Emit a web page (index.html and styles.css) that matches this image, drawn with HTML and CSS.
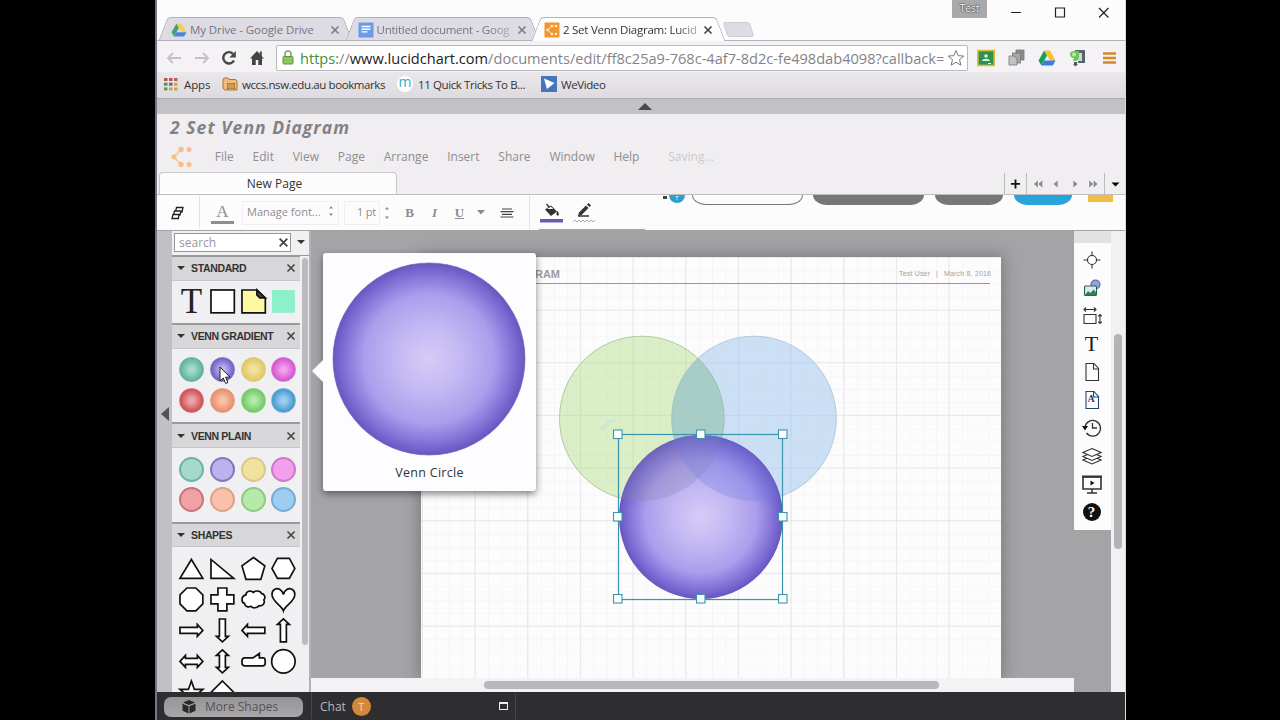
FILE: index.html
```html
<!DOCTYPE html>
<html lang="en">
<head>
  <meta charset="UTF-8" />
  <meta name="viewport" content="width=device-width, initial-scale=1.0" />
  <title>2 Set Venn Diagram: Lucidchart</title>
  <link rel="stylesheet" href="styles.css">
</head>
<body>
  <div class="window">

    <!-- Browser tabs -->
    <div class="tabstrip">
      <div class="tab">
        <svg class="tab-icon" viewBox="0 0 16 16"><path fill="#3fa66b" d="M5.5 1.5 0.5 10.2 3 14.5 8 5.8z"/><path fill="#f3cf55" d="M5.5 1.5h5l5 8.7h-5z"/><path fill="#4a86d8" d="M3 14.5h10l2.5-4.3h-10z"/></svg>
        <span class="tab-title t1">My Drive - Google Drive</span>
        <svg class="tab-x" viewBox="0 0 10 10"><path d="M1.5 1.5l7 7M8.5 1.5l-7 7"/></svg>
      </div>
      <div class="tab">
        <svg class="tab-icon" viewBox="0 0 16 16"><rect x=".5" y=".5" width="15" height="15" rx="1" fill="#6b9ae6"/><path stroke="#fff" stroke-width="1.4" d="M3.5 4.5h9M3.5 7.2h9M3.5 9.9h6"/></svg>
        <span class="tab-title t2">Untitled document - Goog</span>
        <svg class="tab-x" viewBox="0 0 10 10"><path d="M1.5 1.5l7 7M8.5 1.5l-7 7"/></svg>
      </div>
      <div class="tab active">
        <svg class="tab-icon" viewBox="0 0 16 16"><rect x=".5" y=".5" width="15" height="15" rx="1" fill="#f0962c"/><g fill="#fff0da"><circle cx="3.6" cy="8" r="1.3"/><circle cx="8" cy="4" r="1.3"/><circle cx="12" cy="4" r="1.3"/><circle cx="8" cy="12" r="1.3"/><circle cx="12" cy="12" r="1.3"/></g><path fill="none" stroke="#fff0da" stroke-width=".9" d="M8 4 3.6 8 8 12"/></svg>
        <span class="tab-title t3">2 Set Venn Diagram: Lucid</span>
        <svg class="tab-x" viewBox="0 0 10 10"><path d="M1.5 1.5l7 7M8.5 1.5l-7 7"/></svg>
      </div>
      <div class="new-tab"></div>
      <div class="window-buttons">
        <span class="profile">Test</span>
        <svg width="120" height="24" viewBox="0 0 120 24" fill="none" stroke="#222" stroke-width="1.2"><path d="M16 12.500h10M60.500 8h9v9h-9zM104 8l9.500 9.500M113.500 8l-9.500 9.500"/></svg>
      </div>
    </div>

    <div class="address-row">
      <div class="nav-buttons">
        <svg width="18" height="18" viewBox="0 0 18 18" class="nav off"><path d="M16 9H3M8 4 3 9l5 5"/></svg>
        <svg width="18" height="18" viewBox="0 0 18 18" class="nav off"><path d="M2 9h13M10 4l5 5-5 5"/></svg>
        <svg width="18" height="18" viewBox="0 0 18 18" class="nav"><path d="M14 11.500A5.700 5.700 0 1 1 13 4.800"/><path d="M15.800 2v6.500H9.300z" fill="#444" stroke="none"/></svg>
        <svg width="18" height="18" viewBox="0 0 18 18"><path fill="#444" d="M9 2 2 9.500h2V16h3.700v-5h2.600v5H14V9.500h2l-2.200-2.300V2.500h-2v2.400z"/></svg>
      </div>
      <div class="omnibox">
        <svg width="12" height="15" viewBox="0 0 12 15"><path fill="none" stroke="#8d9a86" stroke-width="1.6" d="M3 7V4a3 3 0 0 1 6 0v3"/><rect x="1" y="6.500" width="10" height="7.500" rx="1" fill="#8cc860" stroke="#5f9544"/></svg>
        <span class="url"><span class="secure">https:</span>//<span class="host">www.lucidchart.com</span>/documents/edit/ff8c25a9-768c-4af7-8d2c-fe498dab4098?callback=</span>
        <svg class="star" width="18" height="18" viewBox="0 0 18 18"><path fill="#fff" stroke="#777" d="M9 1.500l2.200 5.200 5.600.4-4.300 3.600 1.400 5.500L9 13.200l-4.900 3 1.400-5.500L1.200 7.100l5.600-.4z"/></svg>
      </div>
      <div class="extensions">
        <svg width="18" height="18" viewBox="0 0 18 18"><rect x=".8" y="1.500" width="16.400" height="15" fill="#2f9350" stroke="#e2bd3d" stroke-width="1.600"/><circle cx="9" cy="7" r="1.800" fill="#d9f2dd"/><path fill="#d9f2dd" d="M5 12c.5-3 7.500-3 8 0z"/><path stroke="#fff" d="M11 14.500h3"/></svg>
        <svg width="18" height="18" viewBox="0 0 18 18" stroke="#777" stroke-width=".8"><rect x="8" y="1" width="8" height="10" fill="#8b8b8b"/><rect x="4.500" y="4" width="8" height="10" fill="#a6a6a6"/><path d="M1 7h5l3 3v6H1z" fill="#c2c2c2"/></svg>
        <svg width="18" height="18" viewBox="0 0 18 18"><path fill="#1c9e5a" d="M6.200 1.500.5 11.400l2.900 5 5.700-9.900z"/><path fill="#f6c42c" d="M6.200 1.500h5.700l5.700 9.900h-5.700z"/><path fill="#3b7bdc" d="M3.400 16.400h11.400l2.800-5H6.300z"/></svg>
        <svg width="18" height="18" viewBox="0 0 18 18"><path fill="#59636a" d="M6 1h10v13H9v-2h4V4H6z"/><path fill="#cfd5d8" d="M9 4h4v8H9z"/><path fill="#6cc45d" d="M1 5q0-3 4-3h5v5q0 5-4 5H4l1-3Q1 9 1 5z"/><circle cx="5" cy="5.500" r="2" fill="#b7eba6"/><path fill="#555" d="M5 13h3v2H5zM4 15h5l-2.500 2.500z"/></svg>
        <svg class="hamburger" width="14" height="18" viewBox="0 0 14 18"><path stroke="#d18a25" stroke-width="2.400" d="M0 4.500h13M0 9h13M0 13.500h13"/></svg>
      </div>
    </div>

    <div class="bookmarks">
      <svg width="14" height="14" viewBox="0 0 14 14"><path fill="#c0533f" d="M0 1h3.500v3H0zM5 1h3.500v3H5z"/><path fill="#b5624a" d="M10 1h3.500v3H10z"/><path fill="#4d8d59" d="M0 5.700h3.500v3H0z"/><path fill="#486fa8" d="M5 5.700h3.500v3H5z"/><path fill="#d6a13c" d="M10 5.700h3.500v3H10zM5 10.400h3.500v3H5zM10 10.400h3.500v3H10z"/><path fill="#6d9b45" d="M0 10.400h3.500v3H0z"/></svg>
      <span class="bm b1">Apps</span>
      <svg width="16" height="14" viewBox="0 0 16 14"><path fill="#efbd7c" stroke="#a97230" d="M1 2.500 2 1h4l1 1.500h6.500L15 4v9H2.500L1 11z"/><path fill="#8f5a20" d="M5 6h8v6H5z"/><path stroke="#efbd7c" stroke-width=".8" d="M5 8h8M5 10h8M7 6v6M9 6v6M11 6v6"/></svg>
      <span class="bm b2">wccs.nsw.edu.au bookmarks</span>
      <span class="m-icon">m</span>
      <span class="bm b3">11 Quick Tricks To B...</span>
      <svg width="16" height="16" viewBox="0 0 16 16"><rect width="16" height="16" fill="#4577b8"/><path fill="#fff" d="M3 2.500 13.500 7 6 13z"/></svg>
      <span class="bm b4">WeVideo</span>
    </div>

    <div class="collapse-bar"><span class="up-arrow"></span></div>

    <!-- Document header -->
    <header class="doc-header">
      <h1 class="doc-title">2 Set Venn Diagram</h1>
      <nav class="menu">
        <svg class="brand" width="24" height="24" viewBox="0 0 24 24"><path fill="none" stroke="#f4c99c" stroke-width="1.800" d="M11 4.500 4 12l7 7.500"/><g fill="#f1c08c"><circle cx="4" cy="12" r="2.500"/><circle cx="11" cy="4.500" r="2.700"/><circle cx="19" cy="4.500" r="2.500"/><circle cx="11" cy="19.500" r="2.700"/><circle cx="19" cy="19.500" r="2.500"/></g></svg>
        <a>File</a><a>Edit</a><a>View</a><a>Page</a><a>Arrange</a><a>Insert</a><a>Share</a><a>Window</a><a>Help</a>
        <span class="saving">Saving...</span>
      </nav>
      <div class="page-tabs">
        <div class="page-tab">New Page</div>
        <div class="page-nav">
          <svg class="add" width="23" height="21" viewBox="0 0 23 21"><path stroke="#111" stroke-width="2" d="M11.500 6v10M6.500 11h10"/></svg>
          <svg class="steps" width="78" height="21" viewBox="0 0 78 21" fill="#8a898c"><path d="M11 7.500v7L7 11zM15.500 7.500v7L11.500 11zM31 7.500v7L27 11zM47 7.500v7l4-3.500zM63 7.500v7l4-3.500zM67.500 7.500v7l4-3.500z"/></svg>
          <svg width="20" height="21" viewBox="0 0 20 21"><path d="M6.500 9.500h8L10.500 13.500z"/></svg>
        </div>
      </div>
    </header>

    <div class="toolbar">
      <div class="tool first"><svg width="14" height="14" viewBox="0 0 14 14" fill="#fff" stroke="#222" stroke-width="1.300"><path d="M5.500 1.500H12l-1 4.500H4.500z"/><path d="M3.500 5H10L9 9H2.500z"/><path d="M2 8.500h6l-.7 4H1z"/></svg></div>
      <div class="tool font-color"><span>A</span></div>
      <div class="font-select"><span>Manage font...</span><svg width="6" height="10" viewBox="0 0 6 10" fill="#8a8a8a"><path d="M3 0l2 2.500H1zM3 10l2-2.500H1z"/></svg></div>
      <div class="size-box">1 pt</div>
      <div class="tool spin"><svg width="6" height="12" viewBox="0 0 6 12" fill="#8a8a8a"><path d="M3 0l2 2.500H1zM3 12l2-2.500H1z"/></svg></div>
      <div class="tool letter">B</div>
      <div class="tool letter italic">I</div>
      <div class="tool letter underline">U</div>
      <div class="tool caret"><svg width="8" height="5" viewBox="0 0 8 5"><path fill="#888" d="M0 0h8L4 4.500z"/></svg></div>
      <div class="tool align"><svg width="14" height="10" viewBox="0 0 14 10"><path stroke="#444" stroke-width="1.200" d="M2 1h10M0.500 3.700h13M2 6.300h10M0.500 9h13"/></svg></div>
      <div class="tool fill-tool">
        <svg width="24" height="22" viewBox="0 0 24 22"><path d="M6 8.500l6-4 6 6-6 4.500z" fill="#333"/><path d="M7.500 3l5 6" stroke="#333" stroke-width="1.300"/><path d="M8 8l4-2.300 2.300 2.300z" fill="#fff"/><path d="M18.500 10c1.500 2 2 4.500.3 4.500S17 12 18.500 10z" fill="#333"/><path d="M1 18h23v3.500H1z" fill="#675db0"/></svg>
      </div>
      <div class="tool pen-tool">
        <svg width="24" height="22" viewBox="0 0 24 22"><path d="M7 11.500 14 4.500l2.500 2.500-7 7-3.500 1z" fill="#333"/><path d="M15 3.500l1.500-1.500L19 4.500 17.500 6z" fill="#333"/><path d="M6 15h11" stroke="#333" stroke-width="1.500"/><path d="M1 21l2-2 2 2 2-2 2 2 2-2 2 2 2-2 2 2 2-2 2 2 2-2" fill="none" stroke="#aaa"/></svg>
      </div>
      <div class="scroll-line"></div>
      <div class="clipped">
        <span class="dot"></span>
        <span class="avatar">T</span>
        <span class="pill outline"></span>
        <span class="pill dark wide"></span>
        <span class="pill dark"></span>
        <span class="pill blue"></span>
        <span class="square-btn"></span>
      </div>
    </div>

    <!-- Workspace -->
    <div class="workspace">
      <div class="rail"><span class="left-arrow"></span></div>

      <aside class="shapes-panel">
        <div class="search-row">
          <div class="search-box"><span>search</span><svg class="close" viewBox="0 0 10 10"><path d="M1.5 1.5l7 7M8.5 1.5l-7 7"/></svg></div>
          <span class="down-arrow"></span>
        </div>
        <div class="sections">
          <div class="section-list">
            <section>
              <h2><span class="down-arrow"></span>STANDARD<svg class="close" viewBox="0 0 10 10"><path d="M1.5 1.5l7 7M8.5 1.5l-7 7"/></svg></h2>
              <div class="shape-grid">
                <span class="t-shape">T</span>
                <svg viewBox="0 0 31 31" class="shape"><rect x="4" y="4" width="23.500" height="23"/></svg>
                <svg viewBox="0 0 31 31" class="shape note"><path d="M4 4h15l8.500 8.500V27H4z"/><path d="M19 4v5l3 3h5.500z" fill="#444"/></svg>
                <svg viewBox="0 0 31 31"><rect x="4" y="4" width="23" height="23" fill="#8cf0cb"/></svg>
              </div>
            </section>
            <section>
              <h2><span class="down-arrow"></span>VENN GRADIENT<svg class="close" viewBox="0 0 10 10"><path d="M1.5 1.5l7 7M8.5 1.5l-7 7"/></svg></h2>
              <div class="shape-grid">
                <i class="venn grad teal"></i><i class="venn grad violet"></i><i class="venn grad yellow"></i><i class="venn grad pink"></i>
                <i class="venn grad red"></i><i class="venn grad orange"></i><i class="venn grad green"></i><i class="venn grad sky"></i>
              </div>
            </section>
            <section>
              <h2><span class="down-arrow"></span>VENN PLAIN<svg class="close" viewBox="0 0 10 10"><path d="M1.5 1.5l7 7M8.5 1.5l-7 7"/></svg></h2>
              <div class="shape-grid">
                <i class="venn teal"></i><i class="venn violet"></i><i class="venn yellow"></i><i class="venn pink"></i>
                <i class="venn red"></i><i class="venn orange"></i><i class="venn green"></i><i class="venn sky"></i>
              </div>
            </section>
            <section>
              <h2><span class="down-arrow"></span>SHAPES<svg class="close" viewBox="0 0 10 10"><path d="M1.5 1.5l7 7M8.5 1.5l-7 7"/></svg></h2>
              <div class="shape-grid">
                <svg viewBox="0 0 31 31" class="shape"><path d="M15.500 6.500 27 25.500H4z"/></svg>
                <svg viewBox="0 0 31 31" class="shape"><path d="M4 6.500v19h23z"/></svg>
                <svg viewBox="0 0 31 31" class="shape"><path d="M15.500 4.500 27 13l-4 13.500H8L4 13z"/></svg>
                <svg viewBox="0 0 31 31" class="shape"><path d="M9.500 5.500h12L27 15.500l-5.500 10h-12L4 15.500z"/></svg>

                <svg viewBox="0 0 31 31" class="shape"><path d="M11 4h9l7 7v9l-7 7h-9l-7-7v-9z"/></svg>
                <svg viewBox="0 0 31 31" class="shape"><path d="M11 4h9v7h7v9h-7v7h-9v-7H4v-9h7z"/></svg>
                <svg viewBox="0 0 31 31" class="shape"><path d="M8 11C8 7 13 6 15.500 8.500 18 6 23 7 23.500 9.500 27 10 28 14 26 16c1.500 3-1 6.500-5 6-2 2.500-6 2.500-8 .5-3 1.500-6 0-6.500-3C3 18.500 3 12 8 11z"/></svg>
                <svg viewBox="0 0 31 31" class="shape"><path d="M15.500 27C14 22 4 17.500 4 10.500 4 5 9 3.500 12 5.500c2 1.200 3 3 3.500 5 .5-2 1.500-3.800 3.500-5 3-2 8-.5 8 5C27 17.500 17 22 15.500 27z"/></svg>

                <svg viewBox="0 0 31 31" class="shape"><path d="M4 12.500h17.500v-3L27 15.500l-5.500 6v-3H4z"/></svg>
                <svg viewBox="0 0 31 31" class="shape"><path d="M12.500 4v17.500h-3l6 5.500 6-5.500h-3V4z"/></svg>
                <svg viewBox="0 0 31 31" class="shape"><path d="M27 12.500H9.500v-3L4 15.500l5.500 6v-3H27z"/></svg>
                <svg viewBox="0 0 31 31" class="shape"><path d="M12.500 27V9.500h-3l6-5.500 6 5.500h-3V27z"/></svg>

                <svg viewBox="0 0 31 31" class="shape"><path d="M4 15.500l5.500-6v3h12v-3l5.500 6-5.500 6v-3h-12v3z"/></svg>
                <svg viewBox="0 0 31 31" class="shape"><path d="M15.500 4l6 5.500h-3v12h3l-6 5.500-6-5.500h3v-12h-3z"/></svg>
                <svg viewBox="0 0 31 31" class="shape"><path d="M7 12h8l6.500-4.500V12H25q2.300 0 2.300 2.300v3.400q0 2.300-2.300 2.300H7q-3 0-3-3v-2q0-3 3-3z"/></svg>
                <svg viewBox="0 0 31 31" class="shape"><circle cx="15.500" cy="15.500" r="11.800"/></svg>

                <svg viewBox="0 0 31 31" class="shape"><path d="M15.500 4l3 8.500H27l-6.700 5.500 2.700 8.500-7.500-5-7.500 5 2.700-8.500L4 12.500h8.500z"/></svg>
                <svg viewBox="0 0 31 31" class="shape"><path d="M15.500 4 27 15.500 15.500 27 4 15.500z"/></svg>
              </div>
            </section>
          </div>
          <div class="panel-scroll"><span></span></div>
        </div>
        <svg class="cursor" width="12" height="19" viewBox="0 0 12 19"><path fill="#fff" stroke="#222" d="M1 1v14l3.300-3 2.400 5.500 2.200-1-2.300-5.300H11z"/></svg>
      </aside>

      <main class="canvas-area">
        <div class="canvas">
          <svg class="paper" width="580" height="421" viewBox="421 257 580 421">
            <defs>
              <pattern id="minor" x="475" y="310" width="13.170" height="13.170" patternUnits="userSpaceOnUse"><path d="M.5 0v13.170M0 .5h13.170" stroke="#f6f4f7" fill="none"/></pattern>
              <pattern id="major" x="474.500" y="309.500" width="52.670" height="52.670" patternUnits="userSpaceOnUse"><path d="M.5 0v52.670M0 .5h52.670" stroke="#e9e6ea" fill="none"/></pattern>
              <radialGradient id="ball">
                <stop offset="0" stop-color="#d6ccf6"/>
                <stop offset=".35" stop-color="#c3b8f3"/>
                <stop offset=".68" stop-color="#aa9dec"/>
                <stop offset=".88" stop-color="#8171d7"/>
                <stop offset="1" stop-color="#6656c0"/>
              </radialGradient>
            </defs>
            <rect x="421" y="257" width="580" height="421" fill="#fdfcfd"/>
            <rect x="421" y="257" width="580" height="421" fill="url(#minor)"/>
            <rect x="421" y="257" width="580" height="421" fill="url(#major)"/>
            <text class="paper-title" x="560" y="278" text-anchor="end">2 SET VENN DIAGRAM</text>
            <text class="paper-meta" x="899" y="276" textLength="31">Test User</text>
            <text class="paper-meta" x="936" y="276">|</text>
            <text class="paper-meta" x="944" y="276" textLength="47">March 8, 2016</text>
            <path d="M431 283.500h559" stroke="#98979a"/>
            <circle cx="754" cy="418.500" r="82.300" fill="#9cc4ee" fill-opacity=".5" stroke="#9fb9d6" stroke-opacity=".7"/>
            <circle cx="641.800" cy="418.500" r="82.300" fill="#a9dc7c" fill-opacity=".42" stroke="#93bd80" stroke-opacity=".7"/>
            <path d="M697.900 358a82.300 82.300 0 0 1 0 121 82.300 82.300 0 0 1 0-121z" fill="#8db8cc" fill-opacity=".45"/>
            <path d="M602 430q3-8 13-10" fill="none" stroke="#bfdcec" stroke-width="3" stroke-opacity=".4"/>
            <circle cx="701" cy="517" r="82" fill="url(#ball)"/>
            <clipPath id="inside"><circle cx="701" cy="517" r="82"/></clipPath>
            <g clip-path="url(#inside)">
              <circle cx="641.800" cy="418.500" r="82.300" fill="#8585a8" fill-opacity=".27"/>
              <circle cx="754" cy="418.500" r="82.300" fill="#6c78de" fill-opacity=".25"/>
            </g>
            <rect x="618.500" y="434.500" width="164" height="165" fill="none" stroke="#3b94ab" stroke-width="1.200"/>
            <g fill="#fafffe" stroke="#3b94ab" stroke-width="1.100">
              <rect x="613.500" y="430" width="8.500" height="8.500"/><rect x="696.500" y="430" width="8.500" height="8.500"/><rect x="778.500" y="430" width="8.500" height="8.500"/>
              <rect x="613.500" y="512.500" width="8.500" height="8.500"/><rect x="778.500" y="512.500" width="8.500" height="8.500"/>
              <rect x="613.500" y="594.500" width="8.500" height="8.500"/><rect x="696.500" y="594.500" width="8.500" height="8.500"/><rect x="778.500" y="594.500" width="8.500" height="8.500"/>
            </g>
          </svg>
        </div>
        <div class="h-scroll"><span></span></div>
        <div class="preview">
          <svg width="194" height="194" viewBox="0 0 194 194"><circle cx="97" cy="97" r="96" fill="url(#ball)" stroke="#7466b8" stroke-width=".7"/></svg>
          <p>Venn Circle</p>
        </div>
      </main>

      <div class="dock-column">
        <div class="dock">
          <svg viewBox="0 0 20 20"><circle cx="10" cy="10" r="4.500"/><path d="M10 1.500v4M10 14.500v4M1.500 10h4M14.500 10h4"/></svg>
          <svg viewBox="0 0 20 20"><circle cx="13.500" cy="6.500" r="4.500" fill="#8fa3d8" stroke="#50629c"/><rect x="2.500" y="8" width="12" height="9.500" rx="1" fill="#d8eef0" stroke="#285e58"/><path d="M3 17l3-4 2.500 2 3-3.500 3 3.500V17z" fill="#2f8253" stroke="none"/></svg>
          <svg viewBox="0 0 20 20"><path d="M2 8.500h12v9H2zM2 3.500h12M4 1.500l-2 2 2 2M12 1.500l2 2-2 2M18 8.500v9M16.200 10.300 18 8.500l1.800 1.800M16.200 15.700 18 17.500l1.800-1.800"/></svg>
          <span class="dock-t">T</span>
          <svg viewBox="0 0 20 20"><path d="M4 1.500h8l4.500 5v12H4zM11.500 1.500v5.500h5"/></svg>
          <svg viewBox="0 0 20 20"><path d="M4 1.500h8l4.500 5v12H4zM11.500 1.500v5.500h5" stroke="#24446c"/><text x="5.500" y="12" class="dock-a">A</text></svg>
          <svg viewBox="0 0 20 20"><path d="M3 9a7.800 7.800 0 1 1 1.500 6M10.500 5v5h4.500" stroke-width="1.300"/><path d="M0 8h6l-3 4.500z" fill="#111" stroke="none"/></svg>
          <svg viewBox="0 0 20 20"><path d="M10 10l9 4-9 4-9-4z" class="layer"/><path d="M10 6.500l9 4-9 4-9-4z" class="layer"/><path d="M10 2.500l9 4-9 4-9-4z" class="layer"/></svg>
          <svg viewBox="0 0 20 20"><path d="M1 3h18v12H1z" stroke-width="1.600"/><path d="M8.500 6.500v5l4-2.500z" fill="#111" stroke="none"/><path d="M10 15v4M5 19h10" stroke-width="1.500"/><path d="M0 2.500h20" stroke-width="2"/></svg>
          <span class="help">?</span>
        </div>
      </div>
      <div class="v-scroll"><span></span></div>
    </div>

    <footer>
      <div class="more-shapes">
        <svg width="14" height="14" viewBox="0 0 14 14" fill="#292929"><path d="M7 0l6 2.500L7 5 1 2.500zM.5 3.700l6 2.500V13.500l-6-2.700zM13.500 3.700l-6 2.500v7.300l6-2.700z"/></svg>
        <span>More Shapes</span>
      </div>
      <div class="chat">
        <span class="chat-label">Chat</span>
        <span class="chat-user">T</span>
        <span class="chat-box"></span>
      </div>
    </footer>
  </div>
</body>
</html>
```
FILE: styles.css
```css
* {
  margin: 0;
  padding: 0;
  box-sizing: border-box;
}

body {
  background: #000;
  font-family: 'Open Sans', 'Noto Sans', sans-serif;
  font-size: 12px;
  height: 720px;
  overflow: hidden;
}

svg {
  display: block;
  flex: none;
}

.window {
  width: 971px;
  height: 720px;
  margin-left: 155px;
  border-left: 2px solid #77728f;
  border-right: 1px solid #ddd2e6;
  background: #fdfcfd;
  display: flex;
  flex-direction: column;
  overflow: hidden;
}

/* Browser tabs */
.tabstrip {
  height: 41px;
  flex: none;
  display: flex;
  align-items: flex-end;
  padding-left: 6px;
  border-bottom: 1px solid #b2b0b9;
}

.tab {
  position: relative;
  width: 185px;
  height: 23px;
  margin-right: 1.5px;
  padding: 2px 8px 0 8px;
  display: flex;
  align-items: center;
  color: #77757c;
}

.tab::before,
.tab::after {
  content: "";
  position: absolute;
  z-index: 0;
  top: 0;
  bottom: 0;
  background: #dddbe4;
  border-top: 1px solid #b2b0b9;
}

.tab::before {
  left: 0;
  right: 45%;
  border-left: 1px solid #b2b0b9;
  border-radius: 4px 0 0 0;
  transform: skewX(-21deg);
}

.tab::after {
  right: 0;
  left: 45%;
  border-right: 1px solid #b2b0b9;
  border-radius: 0 4px 0 0;
  transform: skewX(21deg);
}

.tab > * {
  position: relative;
  z-index: 1;
}

.tab.active {
  color: #333;
  height: 24px;
  margin-bottom: -1px;
}

.tab.active::before,
.tab.active::after {
  background: #fdfcfd;
}

.tab-icon {
  width: 16px;
  height: 16px;
}

.tab-title {
  flex: 1;
  margin-left: 3px;
  white-space: nowrap;
  font-size: 11.5px;
  letter-spacing: -.25px;
  line-height: 18px;
}

.t1 {
  letter-spacing: -.1px;
}

.t2, .t3 {
  -webkit-mask-image: linear-gradient(to right, #000 80%, transparent 105%);
  mask-image: linear-gradient(to right, #000 80%, transparent 105%);
}

.tab-x {
  width: 10px;
  height: 10px;
  fill: none;
  stroke: #7e7c83;
  stroke-width: 1.6;
}

.active .tab-x {
  stroke: #444;
}

.new-tab {
  width: 27px;
  height: 15px;
  margin: 0 0 3px 2px;
  background: #dddbe4;
  border: 1px solid #cfccd6;
  border-radius: 3px;
  transform: skewX(18deg);
}

.window-buttons {
  margin-left: auto;
  align-self: flex-start;
  display: flex;
  padding-right: 10px;
}

.profile {
  width: 35px;
  height: 18px;
  margin-right: 8px;
  background: #a9a8aa;
  color: #fff;
  font-size: 10px;
  line-height: 17px;
  text-align: center;
  text-shadow: 0 0 2px #222, 0 0 1px #222;
}

/* Address bar */
.address-row {
  height: 31px;
  flex: none;
  display: flex;
  align-items: center;
  padding-top: 2px;
  background: #f4f2f5;
}

.nav-buttons {
  width: 119px;
  display: flex;
  gap: 9.5px;
  padding-left: 8px;
}

.nav {
  fill: none;
  stroke: #444;
  stroke-width: 2.4;
}

.nav.off {
  stroke: #c3c1c6;
  stroke-width: 1.8;
}

.omnibox {
  width: 692px;
  height: 26px;
  display: flex;
  align-items: center;
  background: #fff;
  border: 1px solid #b9b7bf;
  border-radius: 2px;
  padding-left: 5px;
}

.url {
  flex: 1;
  margin-left: 6px;
  font-size: 14.6px;
  white-space: nowrap;
  color: #858387;
}

.secure {
  color: #3d8f43;
}

.host {
  color: #222;
}

.star {
  margin-right: 2px;
}

.extensions {
  display: flex;
  gap: 12.5px;
  margin-left: 9px;
}

.hamburger {
  margin-left: 4px;
}

.bookmarks {
  height: 26px;
  flex: none;
  display: flex;
  align-items: center;
  padding: 0 0 2px 7px;
  background: linear-gradient(#eae8eb, #dddbdf);
  color: #333;
  font-size: 11.5px;
}

.b1 {
  width: 38px;
  margin-left: 6px;
}

.bm {
  white-space: nowrap;
  letter-spacing: -.4px;
}

.b2 {
  width: 155px;
  margin-left: 4px;
}

.bm.b1 {
  letter-spacing: -.1px;
}

.m-icon {
  width: 16px;
  height: 16px;
  border-radius: 50%;
  background: #fff;
  color: #35b0c4;
  font-size: 14px;
  line-height: 12px;
  text-align: center;
}

.b3 {
  width: 123px;
  margin-left: 5px;
}

.b4 {
  margin-left: 4px;
}

.collapse-bar {
  height: 16px;
  flex: none;
  display: flex;
  align-items: center;
  justify-content: center;
  background: #c2c1c4;
  border-top: 1px solid #adabb0;
  padding-left: 8px;
}

.up-arrow {
  border: 7px solid transparent;
  border-top: 0;
  border-bottom: 7px solid #4a494c;
}

/* Document header */
.doc-header {
  height: 81px;
  flex: none;
  background: #f0eef0;
  border-bottom: 1px solid #bfbdc0;
  display: flex;
  flex-direction: column;
}

.doc-title {
  height: 28px;
  padding-left: 13px;
  font-size: 17.5px;
  line-height: 27px;
  font-style: italic;
  font-weight: 700;
  letter-spacing: 1.05px;
  color: #838184;
}

.menu {
  height: 31px;
  display: flex;
  align-items: center;
  padding-left: 13px;
  gap: 18.8px;
  color: #8f8d91;
}

.brand {
  margin-right: 2px;
}

.saving {
  margin-left: 10px;
  color: #cbc9cc;
}

.page-tabs {
  height: 22px;
  display: flex;
  justify-content: space-between;
}

.page-tab {
  width: 238px;
  height: 22px;
  margin-left: 2px;
  background: #fdfcfd;
  border: 1px solid #c9c7ca;
  border-bottom: 0;
  border-radius: 4px 4px 0 0;
  text-align: center;
  line-height: 21px;
  padding-right: 7px;
  color: #333;
}

.page-nav {
  display: flex;
}

.page-nav svg {
  margin-top: 1px;
}

.add {
  border-left: 1px solid #bbb;
  border-right: 1px solid #bbb;
}

.steps {
  border-right: 1px solid #bbb;
}

/* Toolbar */
.toolbar {
  height: 35px;
  flex: none;
  display: flex;
  align-items: center;
  background: #fdfcfd;
  color: #8e8c90;
}

.tool {
  height: 33px;
  display: flex;
  align-items: center;
  justify-content: center;
}

.first {
  width: 43px;
  border-right: 1px solid #e3e1e4;
}

.font-color {
  width: 42px;
  padding-left: 3px;
}

.font-color span {
  width: 23px;
  height: 21px;
  margin-top: 1px;
  border-bottom: 3px solid #8f8d90;
  font: 17px/18px 'Liberation Serif', serif;
  text-align: center;
}

.font-select {
  width: 97px;
  height: 24px;
  display: flex;
  align-items: center;
  justify-content: space-between;
  padding: 0 4px 3px 4px;
  border: 1px solid #f0eef1;
  font-size: 11px;
  white-space: nowrap;
}

.size-box {
  width: 36px;
  height: 24px;
  margin-left: 5px;
  padding-right: 3px;
  border: 1px solid #f0eef1;
  font-size: 11px;
  letter-spacing: -.2px;
  line-height: 20px;
  text-align: right;
}

.spin {
  width: 13px;
}

.letter {
  width: 25px;
  font: bold 13px 'Liberation Serif', serif;
}

.spin + .letter {
  margin-left: 4px;
}

.italic {
  font-style: italic;
}

.underline {
  text-decoration: underline;
}

.caret {
  width: 17px;
}

.align {
  width: 35px;
}

.fill-tool {
  width: 42px;
  margin-left: 5px;
  border-left: 1px solid #e3e1e4;
}

.pen-tool {
  width: 26px;
}

.fill-tool svg,
.pen-tool svg {
  margin-top: -2px;
}

.scroll-line {
  width: 106px;
  height: 1px;
  align-self: flex-end;
  margin-left: -58px;
  background: #a5a4a7;
}

/* buttons cut off by the header */
.clipped {
  flex: 1;
  align-self: flex-start;
  display: flex;
  align-items: flex-start;
  padding-left: 18px;
}

.dot {
  width: 4px;
  height: 3px;
  margin: 1px 2px 0 0;
  background: #444;
}

.avatar {
  width: 16px;
  height: 8px;
  margin-right: 7px;
  background: #2d9fcb;
  border-radius: 0 0 8px 8px;
  color: #fff;
  font-size: 6px;
  line-height: 7px;
  text-align: center;
}

.pill {
  width: 68px;
  height: 10px;
  margin-right: 11px;
  border-radius: 0 0 14px 14px / 0 0 10px 10px;
}

.pill.outline {
  width: 111px;
  border: 1px solid #777;
  border-top: 0;
  margin-right: 10px;
}

.pill.dark {
  background: #777578;
}

.pill.wide {
  width: 111px;
}

.pill.blue {
  width: 58px;
  margin-right: 16px;
  background: #29a3dc;
}

.square-btn {
  width: 25px;
  height: 7px;
  background: #f1bd45;
}

/* Workspace */
.workspace {
  height: 462px;
  flex: none;
  display: flex;
  border-top: 1px solid #a5a3a6;
}

.rail {
  width: 15px;
  background: #c1c0c4;
  padding-top: 176px;
}

.left-arrow {
  display: block;
  width: 0;
  margin-left: 4px;
  border: 7px solid transparent;
  border-left: 0;
  border-right: 8px solid #535255;
}

.shapes-panel {
  position: relative;
  width: 139px;
  background: #f0eff1;
  border-right: 2px solid #b4b2b6;
  display: flex;
  flex-direction: column;
  overflow: hidden;
}

.search-row {
  height: 24px;
  flex: none;
  display: flex;
  align-items: center;
  gap: 6px;
  padding: 0 0 2px 2px;
}

.search-box {
  width: 117px;
  height: 19px;
  display: flex;
  align-items: center;
  justify-content: space-between;
  padding: 0 1px 0 4px;
  background: #fff;
  border: 1px solid #99979b;
  color: #99979b;
}

.search-box .close {
  width: 11px;
  height: 11px;
}

.down-arrow {
  border: 4px solid transparent;
  border-bottom: 0;
  border-top: 4px solid #333;
}

.close {
  width: 10px;
  height: 10px;
  fill: none;
  stroke: #444;
  stroke-width: 1.6;
}

.sections {
  flex: 1;
  min-height: 0;
  display: flex;
  border-top: 1px solid #99979b;
}

.section-list {
  width: 128px;
  margin-top: -1px;
  overflow: hidden;
}

section h2 {
  height: 25.7px;
  display: flex;
  align-items: center;
  padding: 0 4px 0 5px;
  background: #d7d6d8;
  border-top: 2px solid #99989b;
  border-bottom: 1px solid #c7c5c9;
  color: #333;
  font: bold 10.5px 'Liberation Sans', Arial, sans-serif;
  letter-spacing: -.35px;
}

section h2 .down-arrow {
  margin-right: 6px;
}

section h2 .close {
  margin-left: auto;
}

.shape-grid {
  display: grid;
  grid-template-columns: repeat(4, 30.8px);
  grid-auto-rows: 30.9px;
  padding: 6px 0 5.8px 4px;
}

section:first-child .shape-grid {
  padding: 5px 0 6.5px 4px;
}

.shape {
  fill: #fff;
  stroke: #111;
  stroke-width: 1.7;
}

.note {
  fill: #fbf8a0;
}

.t-shape {
  font: 35px/32px 'Liberation Serif', serif;
  text-align: center;
  color: #222;
}

.venn {
  width: 25px;
  height: 25px;
  margin: 2.5px 3px;
  border-radius: 50%;
  background: var(--light);
  border: 2px solid var(--edge);
}

.venn.grad {
  border-width: 1px;
  background: radial-gradient(circle, var(--light) 15%, var(--dark) 95%);
}

.teal { --light: #a5d9cb; --dark: #3da386; --edge: #6bb5a2; }
.violet { --light: #bbb2ee; --dark: #4c3ab6; --edge: #8478bd; }
.yellow { --light: #f1e2a0; --dark: #d9bc48; --edge: #d8c987; }
.pink { --light: #f0a0ec; --dark: #c932c4; --edge: #cf78cc; }
.red { --light: #eda3a6; --dark: #be2630; --edge: #cc7378; }
.orange { --light: #f8c1a9; --dark: #e2774c; --edge: #dfa087; }
.green { --light: #b5eaa9; --dark: #50bc43; --edge: #8dca83; }
.sky { --light: #9dcdf0; --dark: #1a80c0; --edge: #77add3; }

.panel-scroll {
  width: 9px;
  padding: 2px 1px 0 2px;
}

.panel-scroll span {
  display: block;
  height: 387px;
  width: 6px;
  border-radius: 3px;
  background: #bcbabd;
}

.cursor {
  position: absolute;
  left: 47px;
  top: 135px;
}

.canvas-area {
  position: relative;
  width: 763px;
  display: flex;
  flex-direction: column;
}

.canvas {
  height: 447px;
  padding: 26px 0 0 110px;
  background: #a4a3a6;
  overflow: hidden;
}

.paper {
  box-shadow: 0 0 14px 2px rgba(60, 58, 62, .4);
}

.paper-title {
  font: bold 11px 'Liberation Sans', Arial, sans-serif;
  fill: #9c9a9d;
}

.paper-meta {
  font: 7px 'Liberation Sans', Arial, sans-serif;
  fill: #a2a0a4;
}

.h-scroll {
  flex: 1;
  padding: 3px 0 0 173px;
  background: #f4f2f5;
}

.h-scroll span {
  display: block;
  width: 455px;
  height: 8px;
  border-radius: 4px;
  background: #b9b7bb;
}

/* Shape preview popup */
.preview {
  position: absolute;
  left: 12px;
  top: 22px;
  width: 213px;
  height: 238px;
  padding: 9px;
  border-radius: 3px;
  background: #fdfcfe;
  box-shadow: 0 3px 7px rgba(50, 48, 52, .6);
  color: #333;
  text-align: center;
}

.preview::before {
  content: "";
  position: absolute;
  left: -11px;
  top: 107px;
  border: 11px solid transparent;
  border-left: 0;
  border-right-color: #fdfcfe;
}

.preview p {
  margin-top: 8px;
  font-size: 12.5px;
  letter-spacing: .3px;
}

/* Right dock */
.dock-column {
  width: 37px;
  background: #a4a3a6;
}

.dock {
  height: 299px;
  padding: 7px 2px 0 0;
  border-top: 12px solid #e3e1e4;
  background: #fdfcfd;
  display: flex;
  flex-direction: column;
  align-items: center;
  gap: 8px;
}

.dock svg {
  width: 20px;
  height: 20px;
  fill: none;
  stroke: #333;
  stroke-width: 1.1;
}

.dock .layer {
  fill: #fff;
}

.dock .dock-a {
  font: bold 10px 'Liberation Serif', serif;
  fill: #1f3f86;
  stroke: none;
}

.dock-t {
  height: 20px;
  font: 22px/20px 'Liberation Serif', serif;
  color: #222;
}

.help {
  width: 18px;
  height: 18px;
  margin-top: 1px;
  border-radius: 50%;
  background: #111;
  color: #fff;
  font: bold 15px/18px 'Liberation Serif', serif;
  text-align: center;
}

.v-scroll {
  flex: 1;
  padding: 103px 0 0 3px;
  background: #f2f0f3;
}

.v-scroll span {
  display: block;
  width: 8px;
  height: 215px;
  border-radius: 4px;
  background: #b5b3b7;
}

/* Footer */
footer {
  height: 28px;
  flex: none;
  display: flex;
  align-items: center;
  background: #2e2e30;
}

.more-shapes {
  width: 139px;
  height: 20px;
  margin: 1px 8px 0 7px;
  padding-left: 18px;
  display: flex;
  align-items: center;
  gap: 9px;
  border-radius: 7px;
  background: linear-gradient(#959496, #a8a7a9);
  color: #555356;
}

.chat {
  width: 205px;
  height: 26px;
  display: flex;
  align-items: center;
  padding: 0 7px 0 8px;
  border-left: 1px solid #47464a;
  border-right: 1px solid #47464a;
  color: #bbb9bc;
}

.chat-user {
  width: 19px;
  height: 19px;
  margin-left: 6px;
  border-radius: 50%;
  background: #d3883a;
  color: #f3dcc0;
  font-size: 11px;
  line-height: 19px;
  text-align: center;
}

.chat-box {
  width: 9px;
  height: 8px;
  margin-left: auto;
  border: 1px solid #eee;
  border-top-width: 2px;
}
```
